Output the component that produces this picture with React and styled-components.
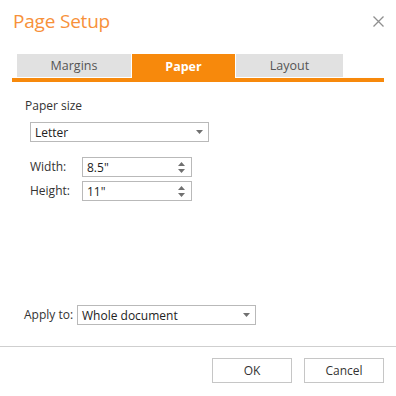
import React from "react";
import styled, { createGlobalStyle } from "styled-components";

const GlobalStyle = createGlobalStyle`
  html, body {
    margin: 0;
    padding: 0;
    background: #ffffff;
  }
  body {
    font-family: "Open Sans", "Liberation Sans", sans-serif;
    color: #333333;
  }
`;

const Dialog = styled.div`
  width: 396px;
  height: 396px;
  background: #ffffff;
  display: flex;
  flex-direction: column;
  box-sizing: border-box;
`;

const Header = styled.div`
  height: 44px;
  display: flex;
  align-items: center;
  justify-content: space-between;
  padding: 0 12px 0 13px;
`;

const Title = styled.h1`
  margin: 0;
  font-size: 19px;
  font-weight: 400;
  color: #f7913a;
  letter-spacing: -0.2px;
  line-height: 24px;
  margin-top: -2px;
`;

const Close = styled.button`
  border: 0;
  background: none;
  padding: 0;
  width: 12px;
  height: 12px;
  display: flex;
  align-items: center;
  justify-content: center;
  margin-top: -2px;
`;

const TabStrip = styled.div`
  margin: 10px 12px 0 12px;
  display: flex;
  flex-direction: column;
`;

const Tabs = styled.div`
  display: flex;
  align-items: flex-end;
  gap: 1px;
  padding-left: 5px;
`;

const Tab = styled.div`
  width: ${(p) => p.$w}px;
  height: ${(p) => (p.$active ? 24 : 23)}px;
  margin-bottom: ${(p) => (p.$active ? 0 : 1)}px;
  box-sizing: border-box;
  display: flex;
  align-items: center;
  justify-content: center;
  font-size: 12.5px;
  font-weight: ${(p) => (p.$active ? 700 : 400)};
  color: ${(p) => (p.$active ? "#ffffff" : "#555555")};
  background: ${(p) => (p.$active ? "#f7890c" : "#e1e1e1")};
`;

const TabBar = styled.div`
  height: 4px;
  background: #f7890c;
`;

const Content = styled.div`
  flex: 1;
  display: flex;
  flex-direction: column;
  padding: 16px 0 0 25px;
`;

const Label = styled.div`
  font-size: 12px;
  line-height: 16px;
  color: #333333;
  width: ${(p) => (p.$w ? `${p.$w}px` : "auto")};
  flex-shrink: 0;
`;

const Field = styled.div`
  width: ${(p) => p.$w}px;
  height: 20px;
  box-sizing: border-box;
  border: 1px solid #b9b9b9;
  background: #ffffff;
  display: flex;
  align-items: center;
  justify-content: space-between;
  padding: 0 5px 0 4px;
  font-size: 12px;
  color: #222222;
`;

const Row = styled.div`
  display: flex;
  align-items: center;
  margin: ${(p) => p.$m || "0"};
`;

const Spin = styled.div`
  display: flex;
  flex-direction: column;
  align-items: center;
  gap: 3px;
  margin-right: 1px;
`;

const Spacer = styled.div`
  flex: 1;
`;

const Footer = styled.div`
  box-sizing: border-box;
  border-top: 1px solid #cfcfcf;
  height: 50px;
  flex-shrink: 0;
  display: flex;
  justify-content: flex-end;
  align-items: flex-start;
  gap: 12px;
  padding: 11px 12px 0 0;
`;

const Button = styled.button`
  width: 80px;
  height: 25px;
  border: 1px solid #c6c6c6;
  background: #ffffff;
  font-family: "Open Sans", "Liberation Sans", sans-serif;
  font-size: 12px;
  color: #333333;
  padding: 0;
`;

const Caret = () => (
  <svg width="7" height="4" viewBox="0 0 7 4">
    <path d="M0 0 L7 0 L3.5 4 Z" fill="#707070" />
  </svg>
);

const Spinner = () => (
  <Spin>
    <svg width="7" height="4" viewBox="0 0 7 4">
      <path d="M0 4 L7 4 L3.5 0 Z" fill="#707070" />
    </svg>
    <svg width="7" height="4" viewBox="0 0 7 4">
      <path d="M0 0 L7 0 L3.5 4 Z" fill="#707070" />
    </svg>
  </Spin>
);

const Select = ({ value, w }) => (
  <Field $w={w}>
    <span>{value}</span>
    <Caret />
  </Field>
);

const NumberBox = ({ value }) => (
  <Field $w={110}>
    <span>{value}</span>
    <Spinner />
  </Field>
);

export default function App() {
  return (
    <>
      <GlobalStyle />
      <Dialog>
        <Header>
          <Title>Page Setup</Title>
          <Close aria-label="Close">
            <svg width="11" height="11" viewBox="0 0 11 11">
              <path d="M0.5 0.5 L10.5 10.5 M10.5 0.5 L0.5 10.5" stroke="#8f8f8f" strokeWidth="1.3" />
            </svg>
          </Close>
        </Header>
        <TabStrip>
          <Tabs>
            <Tab $w={114}>Margins</Tab>
            <Tab $w={103} $active>Paper</Tab>
            <Tab $w={107}>Layout</Tab>
          </Tabs>
          <TabBar />
        </TabStrip>
        <Content>
          <Label>Paper size</Label>
          <Row $m="8px 0 0 5px">
            <Select value="Letter" w={179} />
          </Row>
          <Row $m="15px 0 0 5px">
            <Label $w={52}>Width:</Label>
            <NumberBox value={'8.5"'} />
          </Row>
          <Row $m="4px 0 0 5px">
            <Label $w={52}>Height:</Label>
            <NumberBox value={'11"'} />
          </Row>
          <Spacer />
          <Row $m="0 0 21px -1px">
            <Label $w={53}>Apply to:</Label>
            <Select value="Whole document" w={179} />
          </Row>
        </Content>
        <Footer>
          <Button>OK</Button>
          <Button>Cancel</Button>
        </Footer>
      </Dialog>
    </>
  );
}
